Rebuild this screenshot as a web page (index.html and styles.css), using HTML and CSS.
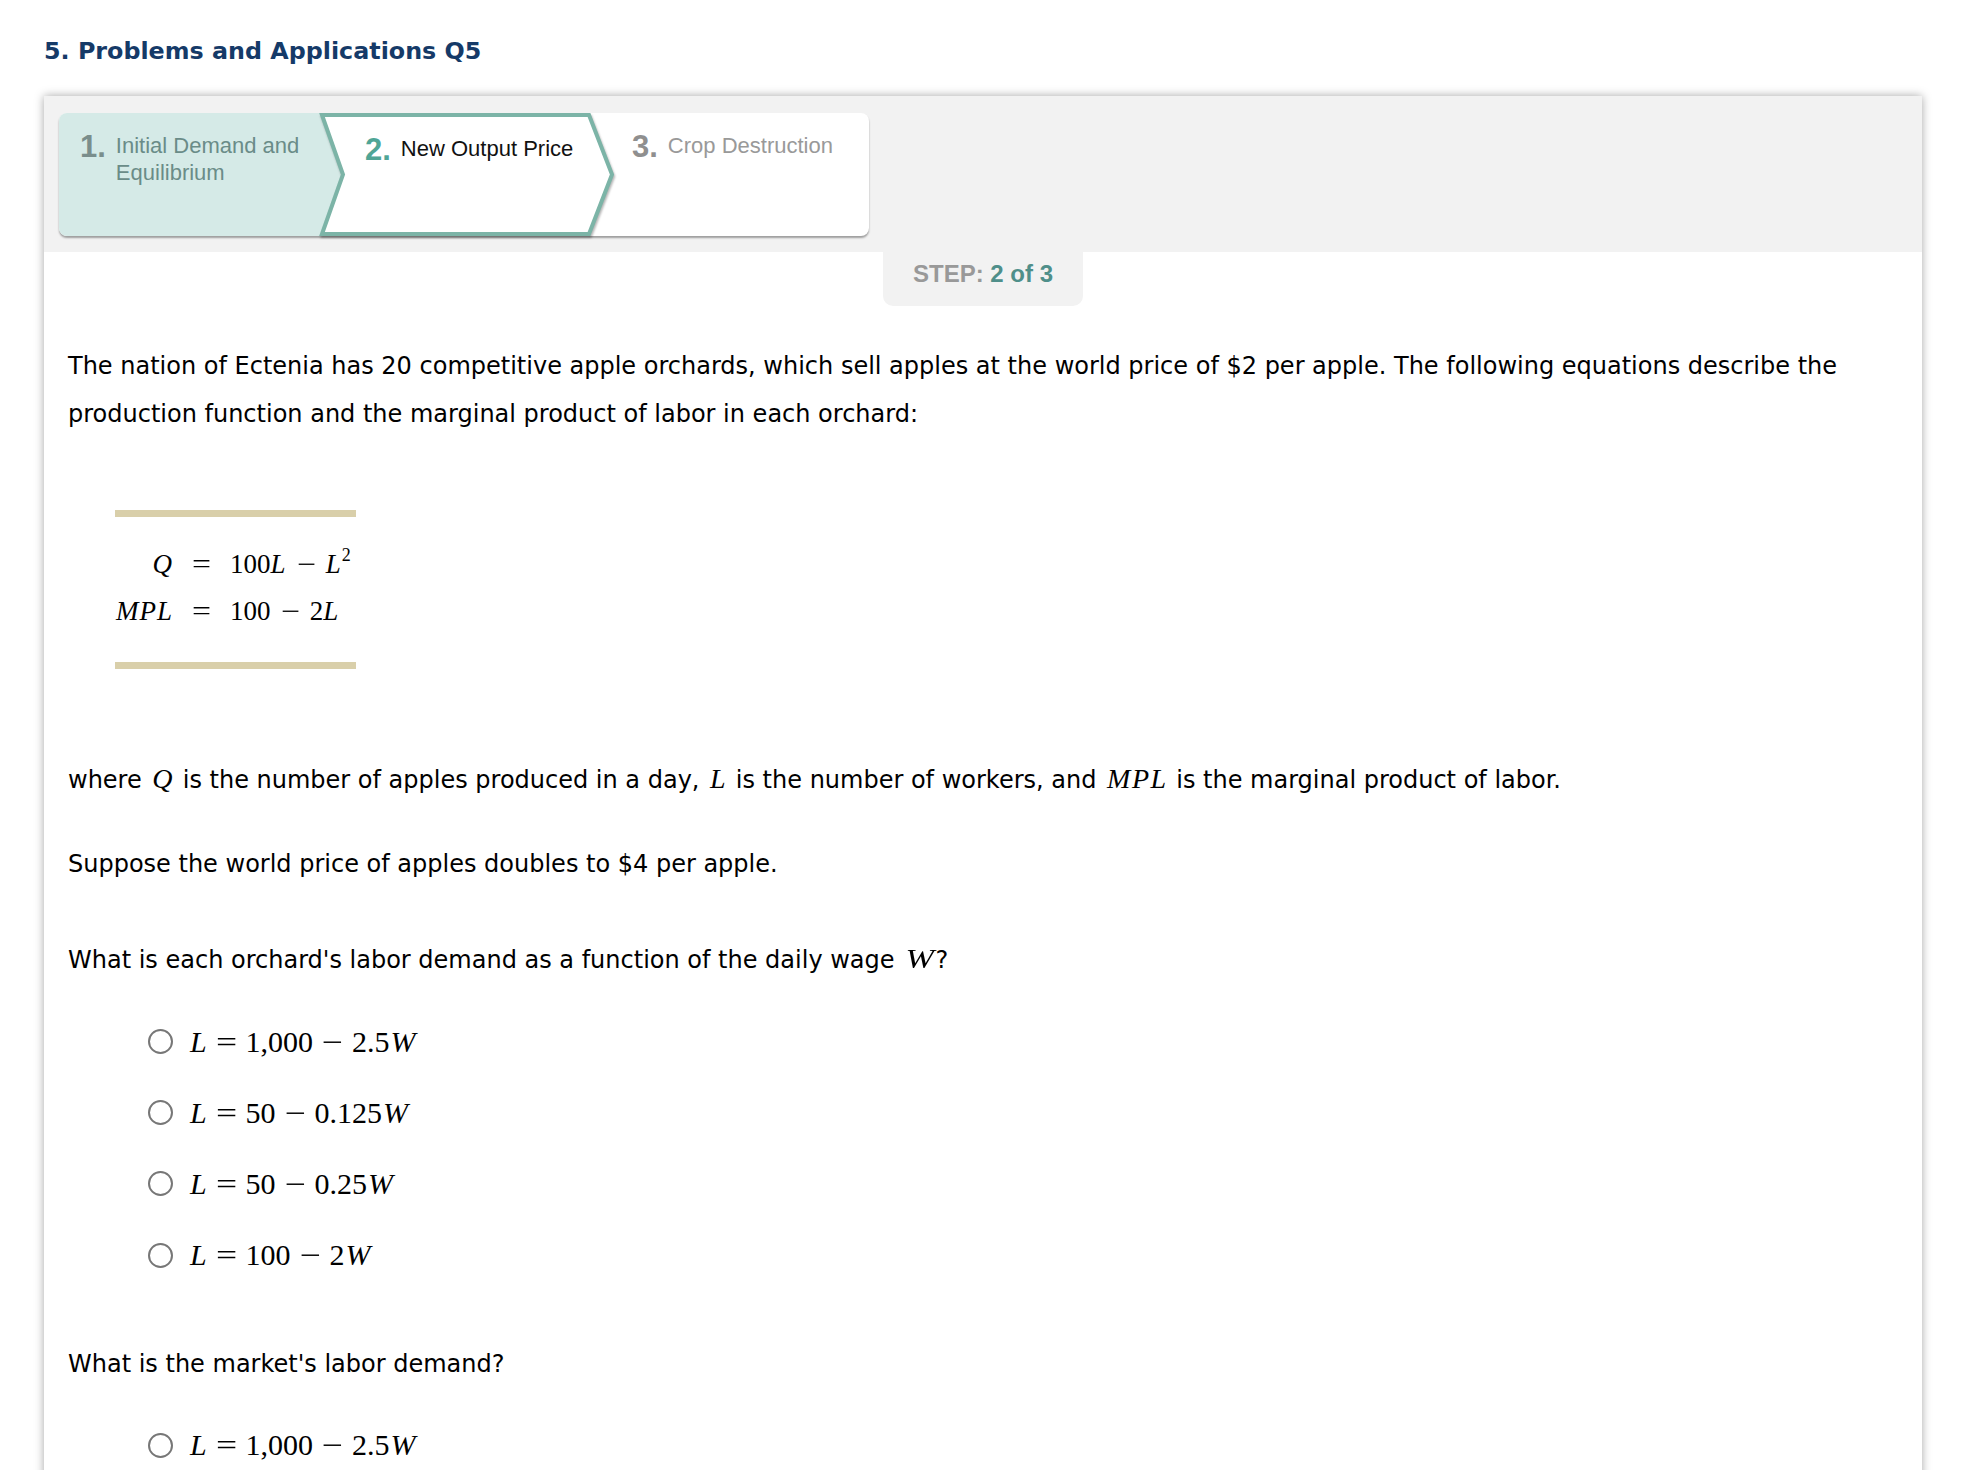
FILE: index.html
```html
<!DOCTYPE html>
<html>
<head>
<meta charset="utf-8">
<link rel="stylesheet" href="styles.css">
</head>
<body>
<h1 class="title">5. Problems and Applications Q5</h1>
<div class="card">
  <div class="card-head">
    <div class="steps">
      <div class="step step1">
        <span class="num">1.</span>
        <span class="label">Initial Demand and<br>Equilibrium</span>
      </div>
      <div class="step step2">
        <svg class="chev" width="296" height="123" viewBox="0 0 296 123">
          <polygon points="0,0 22,61.5 0,123" fill="#d5eae7"/>
          <polygon class="chev-shape" points="2,2 269,2 292,61.5 269,121 2,121 23,61.5" fill="#fff" stroke="#7cb4a7" stroke-width="4" stroke-linejoin="miter"/>
        </svg>
        <span class="num">2.</span>
        <span class="label">New Output Price</span>
      </div>
      <div class="step step3">
        <span class="num">3.</span>
        <span class="label">Crop Destruction</span>
      </div>
    </div>
  </div>
  <div class="stepbadge">STEP: <span class="stepcount">2 of 3</span></div>
  <div class="content">
    <p class="para p1">The nation of Ectenia has 20 competitive apple orchards, which sell apples at the world price of $2 per apple. The following equations describe the production function and the marginal product of labor in each orchard:</p>
    <div class="eqbox">
      <div class="eqgrid">
        <span class="lhs"><i>Q</i></span><span class="eq"><span class="op">=</span></span><span class="rhs">100<i>L</i><span class="op minus">&minus;</span><i>L</i><sup>2</sup></span>
        <span class="lhs"><i>MPL</i></span><span class="eq"><span class="op">=</span></span><span class="rhs">100<span class="op minus">&minus;</span>2<i>L</i></span>
      </div>
    </div>
    <p class="para p2">where <i class="mv">Q</i> is the number of apples produced in a day, <i class="mv">L</i> is the number of workers, and <i class="mv">MPL</i> is the marginal product of labor.</p>
    <p class="para p3">Suppose the world price of apples doubles to $4 per apple.</p>
    <p class="para p4">What is each orchard's labor demand as a function of the daily wage <i class="mv w">W</i>?</p>
    <div class="options opts1">
      <label class="opt"><input type="radio" name="q1"><span class="math"><i>L</i><span class="op eqs">=</span>1,000<span class="op minus">&minus;</span>2.5<i class="w">W</i></span></label>
      <label class="opt"><input type="radio" name="q1"><span class="math"><i>L</i><span class="op eqs">=</span>50<span class="op minus">&minus;</span>0.125<i class="w">W</i></span></label>
      <label class="opt"><input type="radio" name="q1"><span class="math"><i>L</i><span class="op eqs">=</span>50<span class="op minus">&minus;</span>0.25<i class="w">W</i></span></label>
      <label class="opt"><input type="radio" name="q1"><span class="math"><i>L</i><span class="op eqs">=</span>100<span class="op minus">&minus;</span>2<i class="w">W</i></span></label>
    </div>
    <p class="para p5">What is the market's labor demand?</p>
    <div class="options opts2">
      <label class="opt"><input type="radio" name="q2"><span class="math"><i>L</i><span class="op eqs">=</span>1,000<span class="op minus">&minus;</span>2.5<i class="w">W</i></span></label>
    </div>
  </div>
</div>
</body>
</html>
```
FILE: styles.css
```css
html, body {
  margin: 0;
  padding: 0;
  background: #fff;
}
body {
  padding: 0 66px 0 44px;
  font-family: "DejaVu Sans", Verdana, sans-serif;
  color: #000;
  overflow: hidden;
  height: 1470px;
}
.title {
  margin: 0;
  padding-top: 36px;
  height: 60px;
  box-sizing: border-box;
  font-family: "DejaVu Sans", Verdana, sans-serif;
  font-weight: bold;
  font-size: 23.8px;
  line-height: 30px;
  color: #153a68;
}
.card {
  margin-top: 36px;
  background: #fff;
  box-shadow: 0 0 9px rgba(0,0,0,0.35);
  min-height: 1500px;
}
.card-head {
  background: #f2f2f2;
  padding: 17px 15px 16px;
}
.steps {
  display: flex;
  width: 810px;
  height: 123px;
  background: #fff;
  border-radius: 8px;
  box-shadow: 0 2px 2px rgba(0,0,0,0.35);
  font-family: "Liberation Sans", Arial, sans-serif;
}
.step {
  position: relative;
  display: flex;
  align-items: flex-start;
  box-sizing: border-box;
}
.step .num {
  position: relative;
  font-size: 31px;
  font-weight: bold;
  line-height: 36px;
  margin-right: 10px;
}
.step .label {
  position: relative;
  font-size: 22px;
  line-height: 27px;
  padding-top: 3px;
}
.step1 {
  width: 261px;
  background: #d5eae7;
  border-radius: 8px 0 0 8px;
  padding: 16px 0 0 21px;
}
.step1 .num { color: #7a8e8c; }
.step1 .label { color: #6a8c88; }
.step2 {
  width: 269px;
  padding: 19px 0 0 45px;
}
.chev {
  position: absolute;
  left: 0;
  top: 0;
  overflow: visible;
}
.chev-shape {
  filter: drop-shadow(1px 2px 1px rgba(0,0,0,0.3));
}
.step2 .num { color: #4fa596; }
.step2 .label { color: #111; }
.step3 {
  flex: 1;
  padding: 16px 0 0 43px;
  border-radius: 0 8px 8px 0;
}
.step3 .num { color: #8f8f8f; }
.step3 .label { color: #999; }
.stepbadge {
  width: 200px;
  height: 54px;
  margin: 0 auto;
  background: #f2f2f2;
  border-radius: 0 0 10px 10px;
  font-family: "Liberation Sans", Arial, sans-serif;
  font-weight: bold;
  font-size: 24px;
  line-height: 44px;
  text-align: center;
  color: #999;
}
.stepcount { color: #4f8f8a; }
.content {
  padding: 0 24px;
}
.para {
  margin: 0;
  font-size: 24px;
  line-height: 48px;
}
.p1 { margin-top: 36px; }
.mv {
  font-family: "Liberation Serif", "Times New Roman", serif;
  font-size: 28px;
  line-height: 1;
  letter-spacing: 1.5px;
  margin: 0 1px 0 3px;
}
.mv.w {
  display: inline-block;
  letter-spacing: 0;
  transform: scaleX(1.22);
  margin: 0 4px 0 6px;
}
.op {
  display: inline-block;
  transform: scaleX(1.25);
}
.eqbox {
  margin: 72px 0 0 47px;
  width: 241px;
  border-top: 7px solid #d9cfaa;
  border-bottom: 7px solid #d9cfaa;
  padding: 24px 0 27px;
}
.eqgrid {
  display: grid;
  grid-template-columns: 58px 57px auto;
  font-family: "Liberation Serif", "Times New Roman", serif;
  font-size: 27px;
  line-height: 47px;
}
.eqgrid i { letter-spacing: 1px; }
.eqgrid .lhs { text-align: right; }
.eqgrid .eq { text-align: center; }
.eqgrid .minus { margin: 0 12px; }
.eqgrid sup {
  font-size: 18px;
  line-height: 0;
  vertical-align: 12px;
}
.p2 { margin-top: 87px; }
.p3 { margin-top: 36px; }
.p4 { margin-top: 48px; }
.options {
  display: flex;
  flex-direction: column;
  padding-left: 80px;
}
.opts1 { margin-top: 22px; }
.opt {
  display: flex;
  align-items: center;
  height: 71.2px;
}
.opt input {
  appearance: none;
  -webkit-appearance: none;
  margin: 0 17px 0 0;
  width: 25px;
  height: 25px;
  border: 2px solid #777;
  border-radius: 50%;
  background: #fff;
  box-sizing: border-box;
}
.math {
  font-family: "Liberation Serif", "Times New Roman", serif;
  font-size: 30px;
  line-height: 40px;
}
.math .eqs { margin: 0 11px; }
.math .minus { margin: 0 11px; }
.math .w { margin-left: 1px; margin-right: 2px; }
.p5 { margin-top: 49px; }
.opts2 { margin-top: 22px; }
```
